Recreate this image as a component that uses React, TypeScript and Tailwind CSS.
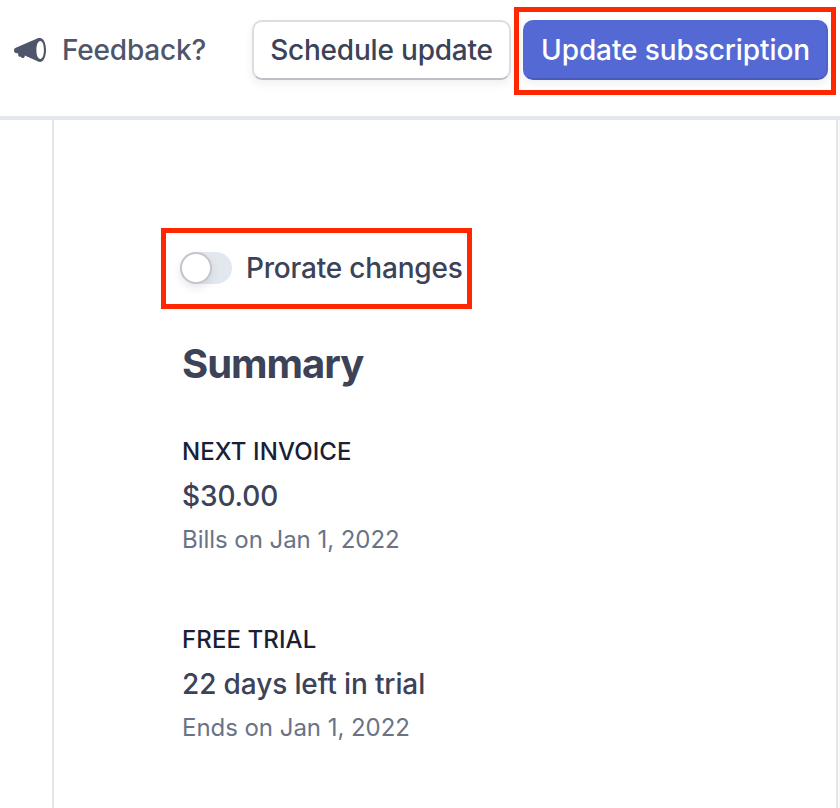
function Megaphone() {
  return (
    <svg className="h-6 w-8 shrink-0" viewBox="0 0 32 24" fill="none" aria-hidden="true">
      <path
        fill="#4f566b"
        fillRule="evenodd"
        d="M26 0C24 0 23 .5 21.5 1.2L1.8 9.8C.5 10.4 0 11.2 0 12.5C0 13.9.7 14.8 2 15L4.2 15.4V17.2C4.2 18 5 18.7 6 18.7H7C7.4 19.8 8 20 9 20C10.1 20 10.7 19.4 10.7 18.5V17.5L22 22.6C23.4 23.4 24.6 24 26 24C29.6 24 32 18.8 32 12C32 5.2 29.6 0 26 0ZM26.3 3C28.4 3 29.9 6.8 29.9 12C29.9 17.2 28.4 21 26.3 21C24 21 22.4 17.2 22.4 12C22.4 6.8 24 3 26.3 3Z"
      />
    </svg>
  );
}

type InvoiceBlockProps = { label: string; value: string; note: string };

function InvoiceBlock({ label, value, note }: InvoiceBlockProps) {
  return (
    <section className="flex h-[188px] shrink-0 flex-col whitespace-nowrap">
      <h3 className="h-[41px] text-[24px] leading-8 font-medium tracking-[0.1px] text-[#1a1f36]">{label}</h3>
      <p className="h-[45px] text-[28px] leading-[38px] font-medium tracking-[-0.12px] text-[#3c4257]">{value}</p>
      <p className="text-[24px] leading-[35px] tracking-[-0.04px] text-[#697386]">{note}</p>
    </section>
  );
}

export default function App() {
  return (
    <div className="flex h-[808px] w-[840px] flex-col overflow-hidden bg-white font-['Inter','Liberation_Sans',sans-serif] text-[#3c4257]">
      <header className="flex h-[120px] shrink-0 items-start border-b-4 border-[#e3e8ee] whitespace-nowrap">
        <div className="flex h-[100px] w-[252px] items-center pl-3.5">
          <Megaphone />
          <span className="ml-4 text-[28px] leading-10 font-medium tracking-[-0.2px] text-[#4f566b]">Feedback?</span>
        </div>
        <button className="mt-5 flex h-[60px] w-[259px] items-center justify-center rounded-[10px] border-2 border-[#dcdde2] border-b-[#bfc0c7] bg-white text-[28px] font-medium tracking-[-0.2px] shadow-[0_4px_8px_rgba(60,66,87,0.08)]">
          Schedule update
        </button>
        <div className="mt-[7px] ml-[3px] flex h-[88px] w-[322px] items-start border-[5px] border-[#ff2600] pt-2 pl-1">
          <button className="flex h-[60px] w-[305px] items-center justify-center rounded-[10px] border-2 border-[#5469d4] border-r-[#4f62c8] border-b-[#4a5bbd] bg-[#5469d4] text-[28px] font-medium tracking-[-0.1px] text-white shadow-[0_4px_8px_rgba(60,66,87,0.08)]">
            Update subscription
          </button>
        </div>
      </header>
      <div className="flex min-h-0 grow">
        <aside className="w-[54px] shrink-0 border-r-2 border-[#e3e8ee]" />
        <main className="flex w-[782px] shrink-0 flex-col pt-[108px] pl-[107px]">
          <div className="flex h-[81px] w-[311px] shrink-0 items-center border-[5px] border-[#ff2600] pb-px pl-3.5 whitespace-nowrap">
            <div className="flex h-8 w-[52px] shrink-0 items-center rounded-full bg-[#e3e8ee]">
              <div className="h-8 w-8 rounded-full border-2 border-[#c4c5cd] bg-white shadow-[0_4px_8px_rgba(60,66,87,0.12)]" />
            </div>
            <span className="ml-3.5 text-[28px] leading-10 font-medium tracking-[-0.2px]">Prorate changes</span>
          </div>
          <div className="flex shrink-0 flex-col pl-[21px]">
            <h2 className="mt-[31px] mb-12 text-[40px] leading-12 font-bold tracking-[-1px]">Summary</h2>
            <InvoiceBlock label="NEXT INVOICE" value="$30.00" note="Bills on Jan 1, 2022" />
            <InvoiceBlock label="FREE TRIAL" value="22 days left in trial" note="Ends on Jan 1, 2022" />
          </div>
        </main>
        <div className="grow border-l-2 border-[#e6e6e8] bg-[#f8f8f8]" />
      </div>
    </div>
  );
}
